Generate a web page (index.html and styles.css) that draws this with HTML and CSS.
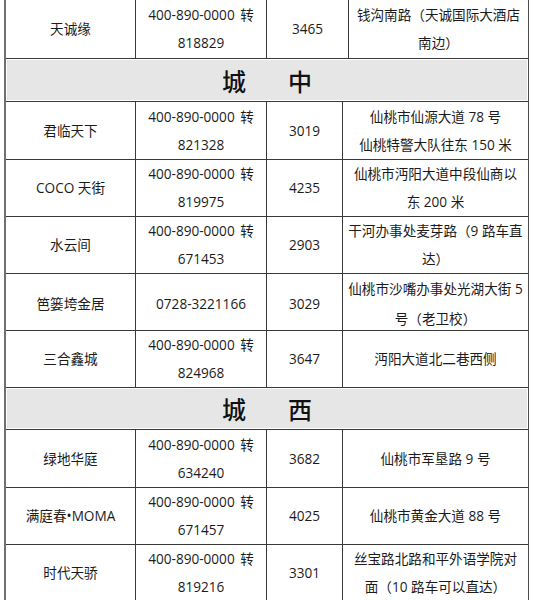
FILE: index.html
```html
<!DOCTYPE html>
<html lang="zh-CN">
<head>
<meta charset="utf-8">
<title>楼盘联系方式</title>
<link rel="stylesheet" href="styles.css">
</head>
<body>
<div class="sheet">
  <div class="row row-first">
    <div class="cell">天诚缘</div>
    <div class="cell phone">400-890-0000 转<br>818829</div>
    <div class="cell">3465</div>
    <div class="cell">钱沟南路（天诚国际大酒店<br>南边）</div>
  </div>
  <div class="section"><div class="section-fill"><span>城</span><span>中</span></div></div>
  <div class="row row-tall">
    <div class="cell">君临天下</div>
    <div class="cell phone">400-890-0000 转<br>821328</div>
    <div class="cell">3019</div>
    <div class="cell">仙桃市仙源大道 78 号<br>仙桃特警大队往东 150 米</div>
  </div>
  <div class="row">
    <div class="cell">COCO 天街</div>
    <div class="cell phone">400-890-0000 转<br>819975</div>
    <div class="cell">4235</div>
    <div class="cell">仙桃市沔阳大道中段仙商以<br>东 200 米</div>
  </div>
  <div class="row">
    <div class="cell">水云间</div>
    <div class="cell phone">400-890-0000 转<br>671453</div>
    <div class="cell">2903</div>
    <div class="cell">干河办事处麦芽路（9 路车直<br>达）</div>
  </div>
  <div class="row">
    <div class="cell">笆篓垮金居</div>
    <div class="cell">0728-3221166</div>
    <div class="cell">3029</div>
    <div class="cell loose">仙桃市沙嘴办事处光湖大街 5<br>号（老卫校）</div>
  </div>
  <div class="row">
    <div class="cell">三合鑫城</div>
    <div class="cell phone">400-890-0000 转<br>824968</div>
    <div class="cell">3647</div>
    <div class="cell">沔阳大道北二巷西侧</div>
  </div>
  <div class="section section-short"><div class="section-fill"><span>城</span><span>西</span></div></div>
  <div class="row row-tall">
    <div class="cell">绿地华庭</div>
    <div class="cell phone">400-890-0000 转<br>634240</div>
    <div class="cell">3682</div>
    <div class="cell">仙桃市军垦路 9 号</div>
  </div>
  <div class="row">
    <div class="cell">满庭春•MOMA</div>
    <div class="cell phone">400-890-0000 转<br>671457</div>
    <div class="cell">4025</div>
    <div class="cell">仙桃市黄金大道 88 号</div>
  </div>
  <div class="row">
    <div class="cell">时代天骄</div>
    <div class="cell phone">400-890-0000 转<br>819216</div>
    <div class="cell">3301</div>
    <div class="cell">丝宝路北路和平外语学院对<br>面（10 路车可以直达）</div>
  </div>
</div>
</body>
</html>
```
FILE: styles.css
```css
* {
  box-sizing: border-box;
}

html, body {
  margin: 0;
  padding: 0;
  background: #ffffff;
}

body {
  font-family: "Open Sans", "Noto Sans CJK SC", sans-serif;
  font-size: 13.6px;
  color: #1c1c1c;
}

.sheet {
  width: 525px;
  margin-left: 4px;
  border-left: 2px solid #707070;
  border-right: 1px solid #4a4a4a;
}

.row {
  display: grid;
  grid-template-columns: 130px 131px 76px 185px;
  height: 57px;
  border-bottom: 1px solid #3a3a3a;
}

.row-first {
  grid-template-columns: 130px 131px 82px 179px;
  height: 59px;
}

.row-tall {
  height: 58px;
}

.cell {
  display: flex;
  align-items: center;
  justify-content: center;
  text-align: center;
  line-height: 28px;
  padding: 0 3px;
  border-right: 1px solid #3a3a3a;
  white-space: nowrap;
}

.cell:last-child {
  border-right: none;
}

.phone {
  word-spacing: 2px;
}

.loose {
  line-height: 30px;
}

.section {
  height: 43px;
  padding: 1px;
  border-bottom: 1px solid #3a3a3a;
}

.section-short {
  height: 42px;
}

.section-fill {
  height: 100%;
  background: #e6e6e6;
  display: flex;
  align-items: center;
  justify-content: center;
  gap: 42px;
  font-family: "Noto Sans CJK SC", sans-serif;
  font-size: 24px;
  font-weight: 500;
  color: #111111;
}
```
